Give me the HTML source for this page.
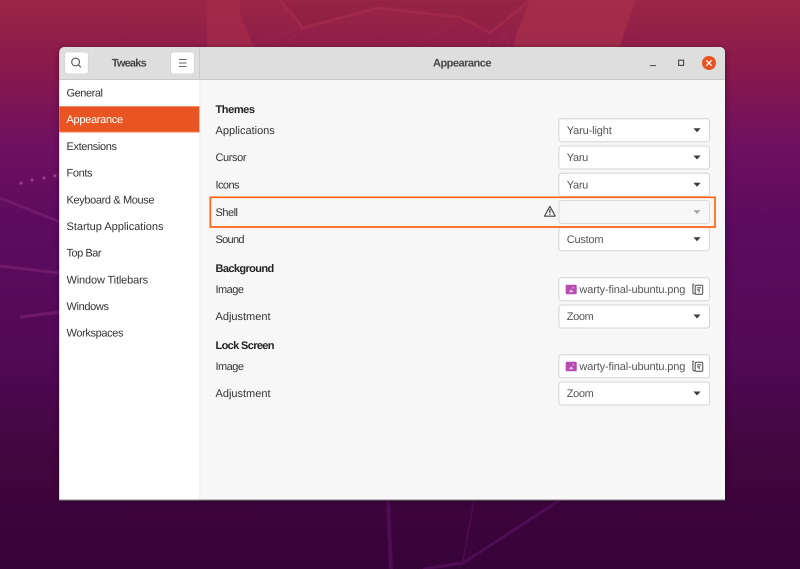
<!DOCTYPE html>
<html><head><meta charset="utf-8"><title>Tweaks</title>
<style>
html,body{margin:0;padding:0;background:#5a0a5a;width:800px;height:569px;overflow:hidden}
svg{display:block}
text{font-family:"Liberation Sans",sans-serif;font-size:11px;fill:#333;text-rendering:geometricPrecision}
.b{font-weight:700}
.v{fill:#555}
</style></head><body>
<svg width="800" height="569" viewBox="0 0 800 569" xmlns="http://www.w3.org/2000/svg">
<defs>
<linearGradient id="bg" x1="0" y1="0" x2="0" y2="1">
<stop offset="0" stop-color="#9c2646"/><stop offset=".12" stop-color="#88194c"/><stop offset=".25" stop-color="#701060"/><stop offset=".38" stop-color="#5e0b5f"/><stop offset=".6" stop-color="#530a58"/><stop offset=".8" stop-color="#42063f"/><stop offset="1" stop-color="#360338"/>
</linearGradient>
<filter id="sh" x="-10%" y="-10%" width="120%" height="120%"><feDropShadow dx="0" dy="1" stdDeviation="3" flood-color="#000" flood-opacity=".4"/></filter>
<filter id="s1" x="-5%" y="-5%" width="110%" height="110%"><feGaussianBlur stdDeviation=".6"/></filter>
<filter id="s2" x="-5%" y="-5%" width="110%" height="110%"><feGaussianBlur stdDeviation=".28"/></filter>
<clipPath id="win"><path d="M59.3 53Q59.3 47 65.3 47H719Q725 47 725 53V500.3H59.3Z"/></clipPath>
<path id="arr" d="M-3.6 -1.9H3.6L0 2.1Z"/>
<g id="cp" fill="none" stroke="#5a5a5a" stroke-width="1.1"><path d="M2.5 1H1.2V9.5Q1.2 10.5 2.5 10.5H3.5"/><rect x="3.5" y="2" width="7.5" height="9" rx="1"/><path d="M5.2 4.5H9.5M5.2 6.5H7.5V9" stroke-width="1.2"/></g>
<g id="fi"><rect width="11" height="9.5" rx="1" fill="#b64bb0"/><path d="M3 7.5L5.5 4.5 8 7.5Z" fill="#e8bfe6"/><circle cx="7.6" cy="3" r=".8" fill="#e8bfe6"/></g>
</defs>

<rect width="800" height="569" fill="url(#bg)"/>
<!-- wallpaper shapes -->
<g filter="url(#s1)">
<path d="M207 0H240V14L254 47H207Z" fill="#aa2f4c" opacity=".6"/>
<path d="M530 0H635L620 47H513L517 33Z" fill="#aa2f4c" opacity=".65"/>
<path d="M240 0H530L490 33 460 17 377 8 303 28 280 0Z" fill="#8b1c40" opacity=".3"/>
<g fill="none" stroke="#a52c4f" stroke-width="2.6" opacity=".75"><path d="M280 0L303 28 377 8 460 17 490 33 530 0"/></g>
<g fill="none" stroke="#a52c4f" stroke-width="1" opacity=".6"><path d="M303 28L253 45M303 28L283 47M458 20L414 47M490 33L488 47M504 32L509 47 M504 32L497 47"/></g>
<g fill="#a8569a"><circle cx="21" cy="183" r="1.4"/><circle cx="32" cy="180" r="1.4"/><circle cx="44" cy="178" r="1.4"/><circle cx="55" cy="175.7" r="1.4"/></g>
<g fill="none" stroke="#75206f" stroke-width="3" opacity=".85"><path d="M0 198L60 222M0 266L60 273M20 317L60 312"/></g>
<g fill="none" stroke="#4f0c55"><path d="M388 500L391 569" stroke-width="4"/><path d="M474 500L463 561" stroke-width="1.5"/><path d="M560 500L463 563 423 569" stroke-width="3"/></g>
</g>

<!-- window -->
<path d="M59.3 53Q59.3 47 65.3 47H719Q725 47 725 53V500.3H59.3Z" fill="#f7f7f7" filter="url(#sh)"/>
<g filter="url(#s2)">
<g clip-path="url(#win)">
<rect x="59" y="47" width="667" height="32.5" fill="#dedede"/>
<rect x="59" y="79" width="667" height="1" fill="#c9c9c9"/>
<rect x="199" y="47" width="1" height="33" fill="#cbcbcb"/>
<rect x="59" y="80" width="140.3" height="421" fill="#fff"/>
<rect x="199.3" y="80" width="1" height="421" fill="#ececec"/>
<rect x="59" y="106" width="140.3" height="26.5" fill="#e95420"/>
<rect x="59" y="106" width="140.3" height="1" fill="#f08a66"/>
<rect x="59" y="131.6" width="140.3" height="1" fill="#f08a66"/>
<rect x="59" y="499.6" width="667" height="1" fill="#666"/>
</g>

<!-- header buttons -->
<rect x="64.7" y="52" width="23.6" height="22" rx="2.5" fill="#fff" stroke="#d2d2d2" stroke-width=".8"/>
<g fill="none" stroke="#555" stroke-width="1.1"><circle cx="75.6" cy="62" r="3.9"/><path d="M78.4 64.8L81 67.4"/></g>
<rect x="170.7" y="52" width="23.6" height="22" rx="2.5" fill="#fff" stroke="#d2d2d2" stroke-width=".8"/>
<path d="M179 59.5H186.5M179 63H186.5M179 66.5H186.5" stroke="#666" stroke-width="1"/>
<text class="b" x="111.7" y="66.3" textLength="35" lengthAdjust="spacing" style="fill:#454545">Tweaks</text>
<text class="b" x="433" y="66.3" textLength="58.5" lengthAdjust="spacing" style="fill:#454545">Appearance</text>

<!-- window controls -->
<path d="M650 65.6H656" stroke="#555" stroke-width="1.1"/>
<rect x="678.6" y="60.2" width="5" height="5.2" fill="none" stroke="#444" stroke-width="1.1"/>
<circle cx="709" cy="63" r="7" fill="#e95420"/>
<path d="M706.3 60.3L711.7 65.7M711.7 60.3L706.3 65.7" stroke="#fff" stroke-width="1.2"/>

<!-- sidebar -->
<text x="66.5" y="96.3" textLength="36.5" lengthAdjust="spacing">General</text>
<text x="66.5" y="123.2" textLength="56.6" lengthAdjust="spacing" style="fill:#fff">Appearance</text>
<text x="66.5" y="149.9" textLength="50.5" lengthAdjust="spacing">Extensions</text>
<text x="66.5" y="176.6" textLength="26" lengthAdjust="spacing">Fonts</text>
<text x="66.5" y="203.3" textLength="88" lengthAdjust="spacing">Keyboard &amp; Mouse</text>
<text x="66.5" y="230" textLength="97" lengthAdjust="spacing">Startup Applications</text>
<text x="66.5" y="256.7" textLength="35" lengthAdjust="spacing">Top Bar</text>
<text x="66.5" y="283.3" textLength="81.6" lengthAdjust="spacing">Window Titlebars</text>
<text x="66.5" y="310" textLength="42.5" lengthAdjust="spacing">Windows</text>
<text x="66.5" y="336.6" textLength="57" lengthAdjust="spacing">Workspaces</text>

<!-- labels -->
<text class="b" x="215.5" y="113" textLength="39.5" lengthAdjust="spacing" style="fill:#222">Themes</text>
<text x="215.5" y="134" textLength="59.3" lengthAdjust="spacing">Applications</text>
<text x="215.5" y="161.2" textLength="31" lengthAdjust="spacing">Cursor</text>
<text x="215.5" y="188.5" textLength="24" lengthAdjust="spacing">Icons</text>
<text x="215.5" y="215.8" textLength="22.5" lengthAdjust="spacing">Shell</text>
<text x="215.5" y="243" textLength="29" lengthAdjust="spacing">Sound</text>
<text class="b" x="215.5" y="272" textLength="58.7" lengthAdjust="spacing" style="fill:#222">Background</text>
<text x="215.5" y="293" textLength="28.5" lengthAdjust="spacing">Image</text>
<text x="215.5" y="320.2" textLength="55" lengthAdjust="spacing">Adjustment</text>
<text class="b" x="215.5" y="349" textLength="59" lengthAdjust="spacing" style="fill:#222">Lock Screen</text>
<text x="215.5" y="370" textLength="28.5" lengthAdjust="spacing">Image</text>
<text x="215.5" y="397.2" textLength="55" lengthAdjust="spacing">Adjustment</text>

<!-- combos -->
<g fill="#fff" stroke="#d4d4d4" stroke-width="1">
<rect x="558.9" y="118.8" width="150.6" height="23" rx="2.5"/>
<rect x="558.9" y="146" width="150.6" height="23" rx="2.5"/>
<rect x="558.9" y="173.3" width="150.6" height="23" rx="2.5"/>
<rect x="558.9" y="200.5" width="150.6" height="23" rx="2.5" fill="#f7f7f7" stroke="#dcdcdc"/>
<rect x="558.9" y="227.8" width="150.6" height="23" rx="2.5"/>
<rect x="558.9" y="277.8" width="150.6" height="23" rx="2.5"/>
<rect x="558.9" y="305" width="150.6" height="23" rx="2.5"/>
<rect x="558.9" y="354.8" width="150.6" height="23" rx="2.5"/>
<rect x="558.9" y="382" width="150.6" height="23" rx="2.5"/>
</g>
<text class="v" x="566.8" y="134" textLength="45" lengthAdjust="spacing">Yaru-light</text>
<text class="v" x="566.8" y="161.2" textLength="21.5" lengthAdjust="spacing">Yaru</text>
<text class="v" x="566.8" y="188.5" textLength="21.5" lengthAdjust="spacing">Yaru</text>
<text class="v" x="566.8" y="243" textLength="36.7" lengthAdjust="spacing">Custom</text>
<text class="v" x="579.4" y="293" textLength="106" lengthAdjust="spacing">warty-final-ubuntu.png</text>
<text class="v" x="566.8" y="320.2" textLength="27" lengthAdjust="spacing">Zoom</text>
<text class="v" x="579.4" y="370" textLength="106" lengthAdjust="spacing">warty-final-ubuntu.png</text>
<text class="v" x="566.8" y="397.2" textLength="27" lengthAdjust="spacing">Zoom</text>
<g fill="#3a3a3a">
<use href="#arr" x="697" y="130.2"/><use href="#arr" x="697" y="157.4"/><use href="#arr" x="697" y="184.7"/>
<use href="#arr" x="697" y="239.2"/><use href="#arr" x="697" y="316.4"/><use href="#arr" x="697" y="393.4"/>
</g>
<use href="#arr" x="697" y="212" fill="#a8a8a8"/>
<use href="#fi" x="565.7" y="284.7"/><use href="#fi" x="565.7" y="361.7"/>
<use href="#cp" x="691.7" y="283.3"/><use href="#cp" x="691.7" y="360.3"/>

<!-- warning -->
<path d="M549.9 206.3L555.3 216.2H544.5Z" fill="none" stroke="#444" stroke-width="1.1" stroke-linejoin="round"/>
<path d="M549.9 209.2V213M549.9 213.8V215" stroke="#444" stroke-width="1.2"/>

<!-- highlight -->
<path d="M210.3 197.3H715V227H210.3Z" fill="none" stroke="#ff6414" stroke-width="1.7"/>
</g>
</svg>
</body></html>
